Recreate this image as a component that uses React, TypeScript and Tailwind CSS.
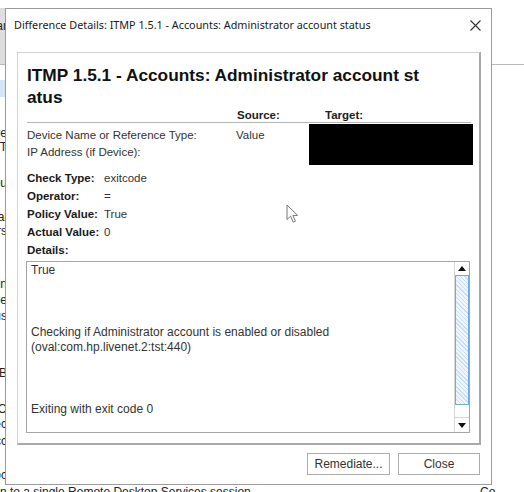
import React from 'react';

// Background application, mostly hidden behind the dialog
function BackgroundApp() {
  return (
    <div className="flex h-[500px] flex-col">
      <div className="flex h-[485px] flex-col">
        <div className="h-[8px]" />
        <div className="flex h-[56px] w-[7px] justify-end overflow-hidden whitespace-nowrap bg-[#dedede] pt-[11px] text-[12px] leading-[14px] text-[#222]">
          Summar
        </div>
        <div className="h-px bg-[#b9b9b9]" />
        <div className="h-[15px]" />
        <div className="h-[17px] w-[7px] bg-[#d6e5f6]" />
        <div className="flex w-[7px] flex-col items-end overflow-hidden whitespace-nowrap text-[12px] leading-[14px] text-[#222]">
          <div className="mt-[29px]">Hardware</div>
          <div>IT</div>
          <div className="mt-[22px]">Accou</div>
          <div className="mt-[20px]">Domai</div>
          <div>Users</div>
          <div className="mt-[39px]">Admin</div>
          <div className="mt-[2px]">Disable</div>
          <div className="mt-[2px]">Status</div>
          <div className="mt-[43px]">SMB</div>
          <div className="mt-[22px]">RDP-O</div>
          <div className="mt-px">Rec</div>
          <div className="mt-[3px]">Acc</div>
          <div className="mt-[20px]">Loc</div>
        </div>
      </div>
      <div className="flex whitespace-nowrap text-[12px] leading-[14px] text-[#222]">
        <span className="w-[480px] overflow-hidden">n to a single Remote Desktop Services session</span>
        <span>Co</span>
      </div>
    </div>
  );
}

function ScrollArrow({ up }: { up?: boolean }) {
  return (
    <svg width="8" height="5" viewBox="0 0 8 5">
      {up ? <polygon points="0,5 8,5 4,0" fill="#111" /> : <polygon points="0,0 8,0 4,5" fill="#111" />}
    </svg>
  );
}

function DetailsBox() {
  const text =
    'True\n\n\n\nChecking if Administrator account is enabled or disabled\n(oval:com.hp.livenet.2:tst:440)\n\n\n\nExiting with exit code 0';
  return (
    <div className="ml-[-1px] mt-[2px] flex h-[172px] w-[444px] border border-[#a6a6a6] bg-white">
      <div className="flex-1 whitespace-pre-wrap pl-[4px] pt-px text-[12px] leading-[15.4px] text-[#333]">{text}</div>
      <div className="flex w-[15px] flex-col border-l border-[#d6d6d6]">
        <div className="flex h-[13px] items-center justify-center">
          <ScrollArrow up />
        </div>
        <div className="h-[130px] border border-[#74a9de] bg-[repeating-linear-gradient(45deg,#c9def4_0px,#c9def4_1px,#eef5fd_1px,#eef5fd_3px)]" />
        <div className="h-[12px]" />
        <div className="flex flex-1 items-center justify-center border-t border-[#d6d6d6]">
          <ScrollArrow />
        </div>
      </div>
    </div>
  );
}

function DifferenceDialog() {
  const checks: [string, string][] = [
    ['Check Type:', 'exitcode'],
    ['Operator:', '='],
    ['Policy Value:', 'True'],
    ['Actual Value:', '0'],
    ['Details:', ''],
  ];

  return (
    <div className="absolute left-[5px] top-[8px] flex h-[477px] w-[487px] flex-col border border-[#9b9b9b] bg-white">
      {/* Window title bar */}
      <div className="flex h-[32px] items-center pl-[8px] pr-[10px] font-['Noto_Sans',sans-serif] text-[10.8px] text-[#1a1a1a]">
        <span>Difference Details: ITMP 1.5.1 - Accounts: Administrator account status</span>
        <svg className="ml-auto" width="11" height="11" viewBox="0 0 11 11">
          <path d="M0.5 0.5 L10.5 10.5 M10.5 0.5 L0.5 10.5" stroke="#333" strokeWidth="1.1" />
        </svg>
      </div>

      {/* Content panel */}
      <div className="ml-[11px] mt-[11px] h-[393px] w-[464px] border-b-2 border-l border-r-2 border-t border-b-[#a9a9a9] border-l-[#d2d2d2] border-r-[#a9a9a9] border-t-[#d2d2d2] pl-[9px] pr-[6px] pt-[11px]">
        <div className="text-[17.3px] font-bold leading-[22px] text-[#111]">
          ITMP 1.5.1 - Accounts: Administrator account st
          <br />
          atus
        </div>

        <div className="mr-[2px] flex h-[15px] border-b border-[#b4b4b4] text-[11.5px] font-bold leading-[14px] text-[#222]">
          <span className="w-[210px]" />
          <span className="w-[88px]">Source:</span>
          <span>Target:</span>
        </div>

        <div className="flex">
          <div className="flex flex-col pt-[4px] text-[11.5px] leading-[17px] text-[#333]">
            <div className="flex">
              <span className="w-[209px]">Device Name or Reference Type:</span>
              <span>Value</span>
            </div>
            <div>IP Address (if Device):</div>
          </div>
          <div className="ml-auto mt-px h-[41px] w-[164px] bg-black" />
        </div>

        <div className="flex flex-col pt-[4px] text-[11.5px] leading-[18px] text-[#333]">
          {checks.map(([label, value]) => (
            <div key={label} className="flex">
              <span className="w-[77px] font-bold text-[#1a1a1a]">{label}</span>
              <span>{value}</span>
            </div>
          ))}
        </div>

        <DetailsBox />
      </div>

      {/* Buttons */}
      <div className="mt-[8px] flex justify-end gap-[8px] pr-[11px] text-[12px] text-[#333]">
        <button className="h-[22px] w-[83px] border border-[#acacac] bg-white">Remediate...</button>
        <button className="h-[22px] w-[82px] border border-[#acacac] bg-white">Close</button>
      </div>
    </div>
  );
}

function Cursor() {
  return (
    <svg className="absolute left-[286px] top-[204px]" width="13" height="20" viewBox="0 0 13 20">
      <path
        d="M1 1 L1 15.5 L4.6 12.2 L7.2 18.2 L9.4 17.2 L6.9 11.4 L11.6 11.4 Z"
        fill="#fff"
        stroke="#777"
        strokeWidth="1"
        strokeLinejoin="round"
      />
    </svg>
  );
}

export default function App() {
  return (
    <div className="relative h-[492px] w-[524px] overflow-hidden bg-white font-['Liberation_Sans',Arial,sans-serif]">
      <BackgroundApp />
      <DifferenceDialog />
      <Cursor />
    </div>
  );
}
